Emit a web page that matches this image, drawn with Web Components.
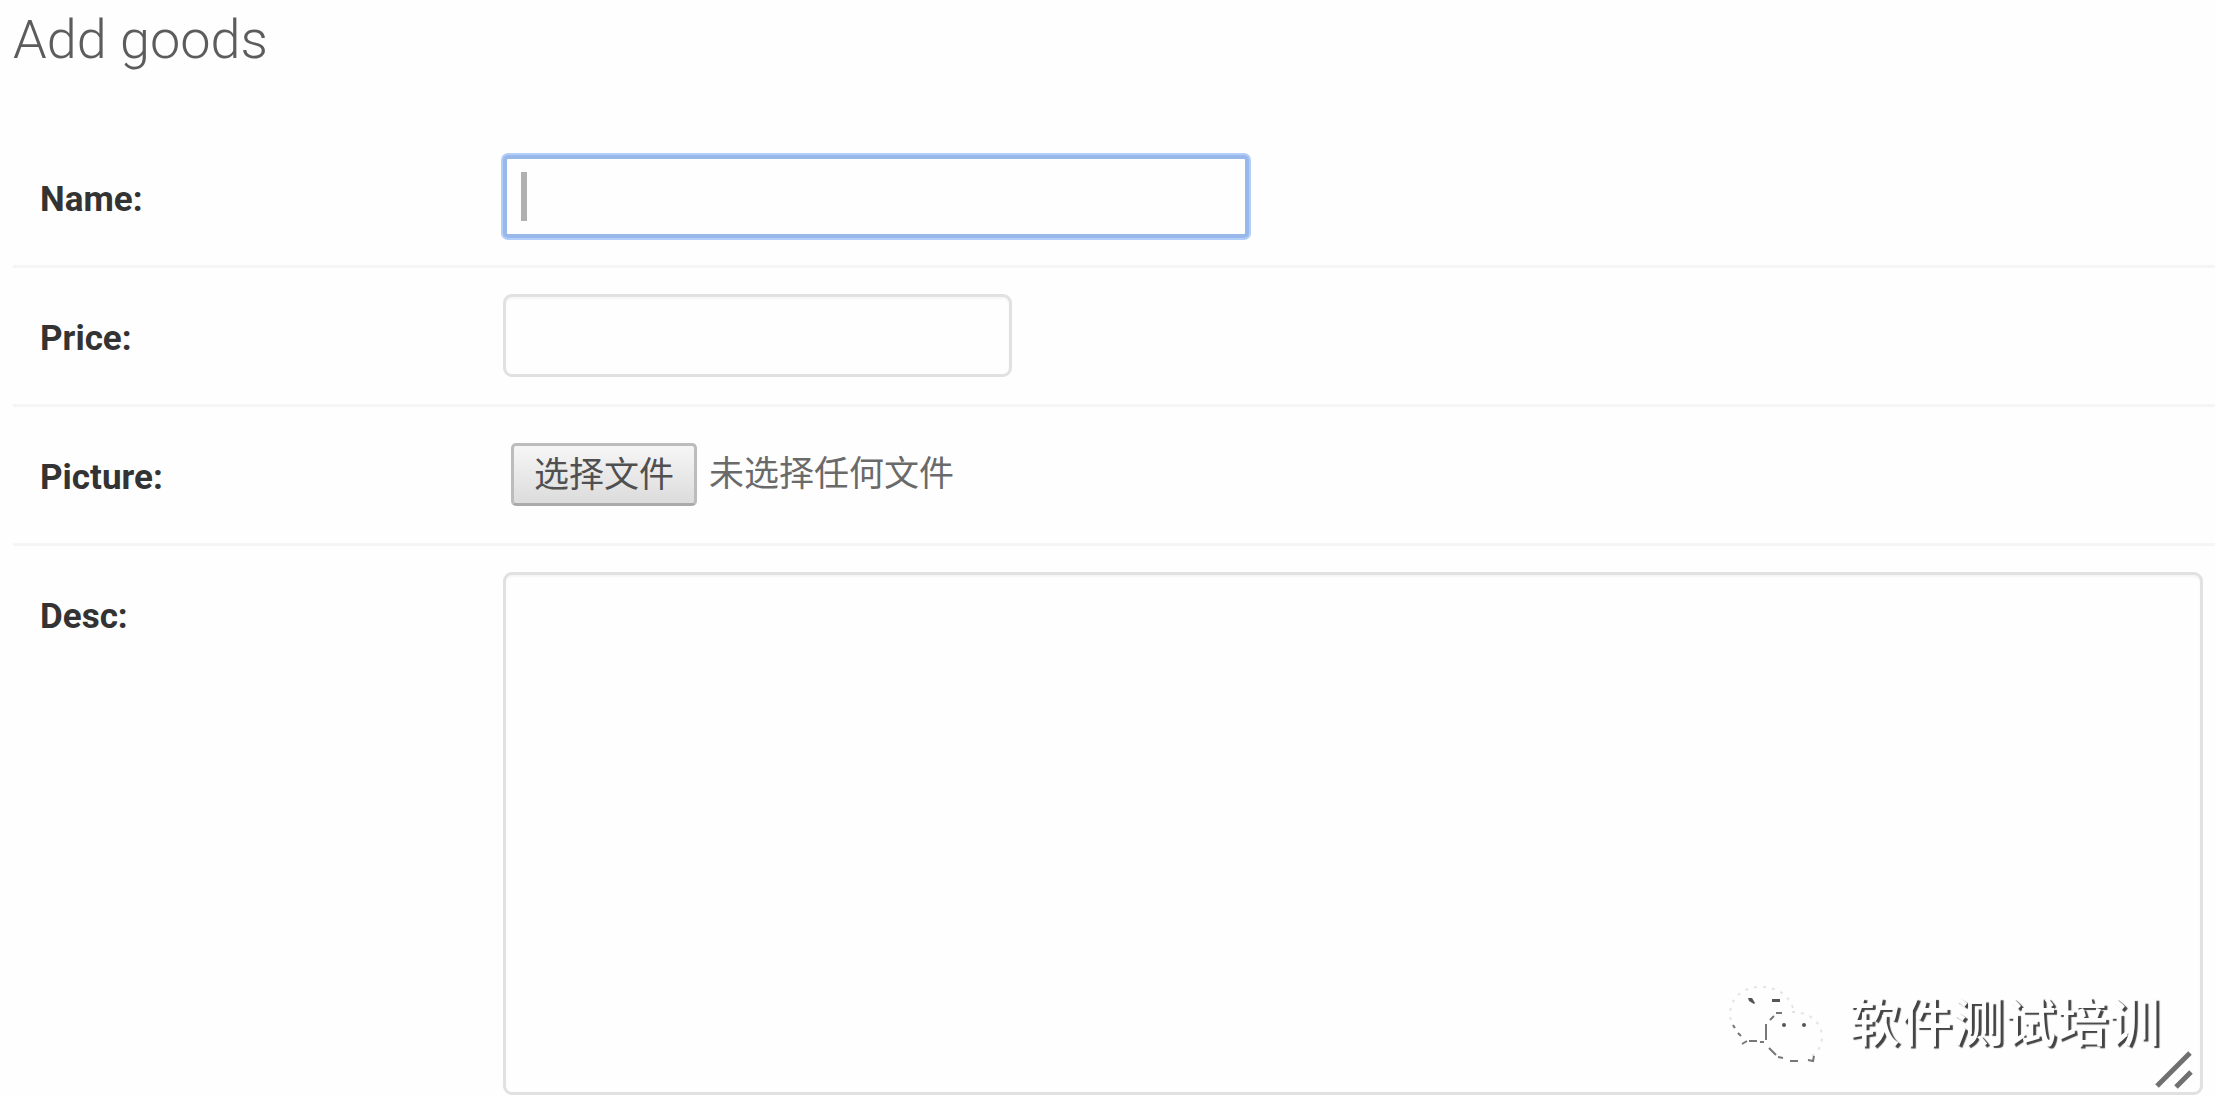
<!DOCTYPE html>
<html lang="zh-CN">
<head>
<meta charset="utf-8">
<title>Add goods</title>
<style>
  body { margin: 0; background: #fefefe; font-family: Roboto, "Noto Sans CJK SC", sans-serif; color: #333; }
</style>
</head>
<body>
<goods-form heading="Add goods">
  <goods-field label="Name:" kind="text" size="wide" active></goods-field>
  <goods-field label="Price:" kind="text" size="medium"></goods-field>
  <goods-field label="Picture:" kind="file"></goods-field>
  <goods-field label="Desc:" kind="area"><account-badge>软件测试培训</account-badge></goods-field>
</goods-form>

<script>
class GoodsForm extends HTMLElement {
  constructor() {
    super();
    this.attachShadow({ mode: "open" }).innerHTML = `
      <style>
        :host { display: block; padding-left: 13px; }
        h1 { margin: 0; padding: 8px 0 57px; font-size: 54px; line-height: 64px; font-weight: 300; color: #5c5c5c; }
        form { display: flex; flex-direction: column; }
      </style>
      <h1></h1>
      <form><slot></slot></form>`;
  }
  connectedCallback() {
    this.shadowRoot.querySelector("h1").textContent = this.getAttribute("heading");
  }
}

class GoodsField extends HTMLElement {
  connectedCallback() {
    if (this.shadowRoot) return;
    const controls = {
      text: `<input type="text" id="control" class="box">`,
      file: `<div class="file">
               <input type="file" id="control" tabindex="-1">
               <button type="button">选择文件</button><span>未选择任何文件</span>
             </div>`,
      area: `<textarea id="control" class="box"></textarea>
             <svg class="grip" viewBox="0 0 40 40" aria-hidden="true">
               <path d="M3 37 36 4M22 38 37 23" fill="none" stroke="#707070" stroke-width="5"/>
             </svg>`
    };
    this.attachShadow({ mode: "open" }).innerHTML = `
      <style>
        :host { display: flex; align-items: flex-start; padding: 26px 12px 27px 27px; border-bottom: 3px solid #f5f5f5; }
        :host([kind="area"]) { padding-bottom: 0; border-bottom: 0; }
        label { flex: 0 0 463px; padding-top: 27px; font-size: 35px; line-height: 36px; font-weight: 700; color: #333; }
        .control { flex: 1; min-width: 0; position: relative; display: flex; }
        .box { box-sizing: border-box; width: 100%; height: 83px; margin: 0; padding: 0 18px; border: 3px solid #e1e1e1; border-radius: 9px; background: #fefefe; font: inherit; font-size: 35px; color: #333; outline: none; box-shadow: inset 0 2px 2px #f6f6f6; }
        textarea.box { height: 523px; padding: 18px; resize: none; }
        :host([size="wide"]) .box { width: 746px; }
        :host([size="medium"]) .box { width: 509px; }
        :host([active]) .box { border: 4px solid #98b8ec; border-radius: 5px; box-shadow: 0 0 0 2px #b4cefa; background: linear-gradient(#b0b0b0, #b0b0b0) 14px center / 6px 49px no-repeat #fefefe; }
        .file { display: flex; align-items: center; gap: 12px; height: 83px; padding-left: 8px; font-size: 35px; line-height: 52px; color: #6a6a6a; }
        .file input { position: absolute; width: 1px; height: 1px; opacity: 0; pointer-events: none; }
        .file button { box-sizing: border-box; height: 63px; margin: 0; padding: 2px 20px 0; border: 3px solid #bcbcbc; border-bottom-color: #aaa; border-radius: 5px; background: linear-gradient(#f6f6f6, #dcdcdc); font: inherit; color: #505050; }
        .grip { position: absolute; right: 9px; bottom: 6px; width: 40px; height: 40px; pointer-events: none; }
        ::slotted(account-badge) { position: absolute; right: 43px; bottom: 30px; }
      </style>
      <label for="control"></label>
      <div class="control">${controls[this.getAttribute("kind")]}<slot></slot></div>`;
    this.shadowRoot.querySelector("label").textContent = this.getAttribute("label");
    const button = this.shadowRoot.querySelector("button");
    if (button) {
      const input = this.shadowRoot.querySelector("input");
      button.addEventListener("click", () => input.click());
      input.addEventListener("change", () => {
        if (input.files.length) this.shadowRoot.querySelector("span").textContent = input.files[0].name;
      });
    }
  }
}

class AccountBadge extends HTMLElement {
  constructor() {
    super();
    this.attachShadow({ mode: "open" }).innerHTML = `
      <style>
        :host { display: flex; align-items: center; gap: 22px; pointer-events: none; }
        svg { width: 98px; height: 80px; }
        span { font-size: 52px; line-height: 64px; font-weight: 500; color: #fefefe; text-shadow: 3px 2px 1px #444; white-space: nowrap; }
      </style>
      <svg viewBox="0 0 98 80" fill="none" aria-hidden="true">
        <g stroke="#e4e4e4" stroke-width="2" stroke-dasharray="3 6">
          <path d="M65 23C60 8 47 2 32 2 14 2 2 14 2 29c0 9 4 16 11 22"/>
          <path d="M64 27c18 0 30 11 30 25 0 8-4 15-10 19"/>
        </g>
        <g stroke="#777" stroke-width="2">
          <path d="M5 40l2 3M10 48l3 3M14 59l5-3M21 56h8M32 57h4" />
          <path d="M38 55V39M42 35l4-4M48 28h6M41 63l7 7M50 72l5 1M62 76h8M80 75l5 1 1-5" />
        </g>
        <g fill="#555">
          <path d="M20 13h4l3 5-1 1-5-3zM44 14h8v3h-8z"/>
          <circle cx="56" cy="40" r="2"/><circle cx="76" cy="40" r="2"/>
        </g>
      </svg>
      <span><slot></slot></span>`;
  }
}

customElements.define("account-badge", AccountBadge);
customElements.define("goods-field", GoodsField);
customElements.define("goods-form", GoodsForm);
</script>
</body>
</html>
